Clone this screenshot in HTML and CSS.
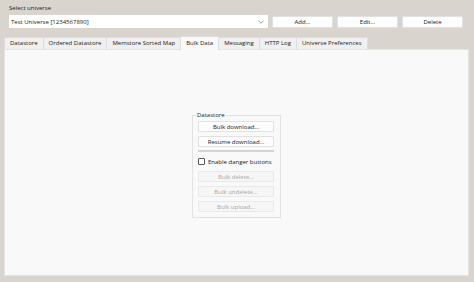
FILE: index.html
```html
<!DOCTYPE html>
<html lang="en">
<head>
    <meta charset="UTF-8">
    <title>Universe Tools</title>
    <link rel="stylesheet" href="styles.css">
</head>
<body>
    <div class="header">
        <div class="caption">Select universe</div>
        <div class="toolbar">
            <div class="combo">
                <span>Test Universe [1234567890]</span>
                <svg class="chevron" width="6" height="4" viewBox="0 0 6 4"><path d="M0.5 0.8 L3 3.2 L5.5 0.8" fill="none" stroke="#666" stroke-width="0.7"/></svg>
            </div>
            <button class="btn">Add...</button>
            <button class="btn">Edit...</button>
            <button class="btn">Delete</button>
        </div>
    </div>

    <div class="tabs">
        <div class="tab">Datastore</div>
        <div class="tab">Ordered Datastore</div>
        <div class="tab">Memstore Sorted Map</div>
        <div class="tab active">Bulk Data</div>
        <div class="tab">Messaging</div>
        <div class="tab">HTTP Log</div>
        <div class="tab">Universe Preferences</div>
    </div>

    <div class="panel">
        <fieldset class="group">
            <legend>Datastore</legend>
            <button class="btn wide">Bulk download...</button>
            <button class="btn wide">Resume download...</button>
            <div class="progress"></div>
            <label class="check"><span class="box"></span>Enable danger buttons</label>
            <button class="btn wide" disabled>Bulk delete...</button>
            <button class="btn wide" disabled>Bulk undelete...</button>
            <button class="btn wide" disabled>Bulk upload...</button>
        </fieldset>
    </div>
</body>
</html>
```

FILE: styles.css
```css
body {
    margin: 0;
    width: 474px;
    height: 282px;
    background-color: #d9d5ce;
    font-family: "Open Sans", "Noto Sans", sans-serif;
    font-size: 6px;
    color: #1a1a1a;
    overflow: hidden;
}

.header {
    padding: 3px 11px 0 9px;
}

.caption {
    height: 11px;
    line-height: 10px;
}

.toolbar {
    display: flex;
    align-items: center;
    gap: 4px;
    height: 15px;
}

.combo {
    width: 259px;
    height: 13px;
    box-sizing: border-box;
    background: #ffffff;
    display: flex;
    align-items: center;
    justify-content: space-between;
    padding: 0 4px 0 2px;
}

.btn {
    font-family: inherit;
    font-size: 6px;
    color: #1a1a1a;
    background: #fdfdfd;
    border: 1px solid #e1e1e1;
    border-radius: 1px;
    width: 61px;
    height: 12px;
    padding: 0;
    line-height: 10px;
    white-space: nowrap;
}

.tabs {
    display: flex;
    align-items: flex-end;
    margin: 8px 0 0 4px;
    height: 12px;
}

.tab {
    height: 11px;
    line-height: 11px;
    padding: 0 5px;
    background: #f0f0f0;
    border: 1px solid #dddddd;
    border-bottom: none;
    margin-right: -1px;
    white-space: nowrap;
}

.tab.active {
    height: 13px;
    line-height: 12px;
    background: #f9f9f9;
    position: relative;
    z-index: 1;
    margin-bottom: -1px;
}

.panel {
    margin: 0 5px 0 4px;
    height: 227px;
    background: #f9f9f9;
    border: 1px solid #e4e4e4;
    box-sizing: border-box;
    display: flex;
    justify-content: center;
    align-items: center;
    padding-top: 4px;
}

.group {
    width: 89px;
    box-sizing: border-box;
    margin: 0;
    padding: 2px 6px 5px 5px;
    border: 1px solid #e2e2e2;
    display: flex;
    flex-direction: column;
    gap: 4px;
}

.group legend {
    padding: 0 1px;
    margin-left: -2px;
    line-height: 8px;
}

.btn.wide {
    width: 76px;
    height: 11px;
}

.btn:disabled {
    background: #f6f6f6;
    border-color: #e9e9e9;
    color: #a6a6a6;
}

.progress {
    height: 2px;
    background: #d4d4d4;
    margin: -1px 0 1px;
}

.check {
    display: flex;
    align-items: center;
    gap: 3px;
    height: 9px;
    margin-bottom: 1px;
    white-space: nowrap;
}

.box {
    width: 7px;
    height: 7px;
    box-sizing: border-box;
    border: 1px solid #555;
    border-radius: 1px;
    background: #fff;
}
```
